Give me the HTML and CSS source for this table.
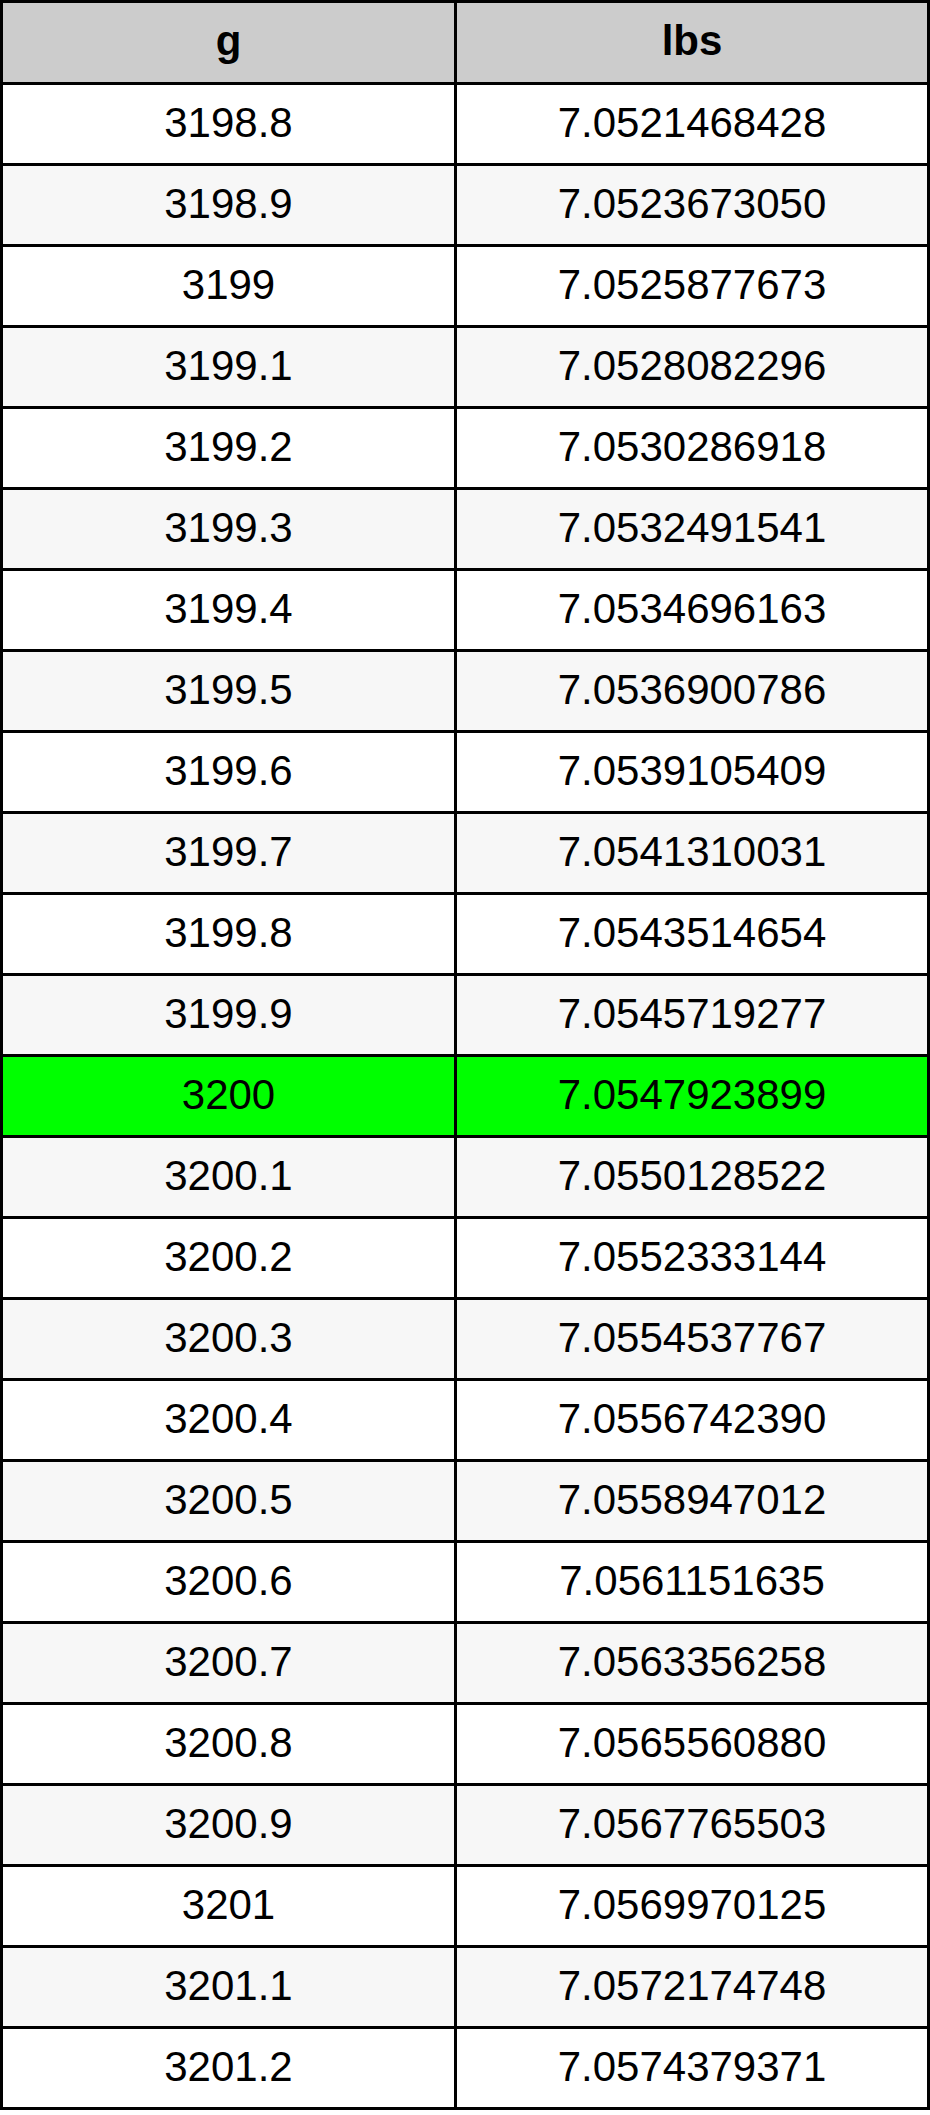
FILE: index.html
```html
<!DOCTYPE html>
<html>
<head>
<meta charset="utf-8">
<link rel="stylesheet" href="styles.css">
</head>
<body>
<table class="conv">
<thead>
<tr><th class="c1">g</th><th class="c2">lbs</th></tr>
</thead>
<tbody>
<tr><td>3198.8</td><td>7.0521468428</td></tr>
<tr><td>3198.9</td><td>7.0523673050</td></tr>
<tr><td>3199</td><td>7.0525877673</td></tr>
<tr><td>3199.1</td><td>7.0528082296</td></tr>
<tr><td>3199.2</td><td>7.0530286918</td></tr>
<tr><td>3199.3</td><td>7.0532491541</td></tr>
<tr><td>3199.4</td><td>7.0534696163</td></tr>
<tr><td>3199.5</td><td>7.0536900786</td></tr>
<tr><td>3199.6</td><td>7.0539105409</td></tr>
<tr><td>3199.7</td><td>7.0541310031</td></tr>
<tr><td>3199.8</td><td>7.0543514654</td></tr>
<tr><td>3199.9</td><td>7.0545719277</td></tr>
<tr class="hl"><td>3200</td><td>7.0547923899</td></tr>
<tr><td>3200.1</td><td>7.0550128522</td></tr>
<tr><td>3200.2</td><td>7.0552333144</td></tr>
<tr><td>3200.3</td><td>7.0554537767</td></tr>
<tr><td>3200.4</td><td>7.0556742390</td></tr>
<tr><td>3200.5</td><td>7.0558947012</td></tr>
<tr><td>3200.6</td><td>7.0561151635</td></tr>
<tr><td>3200.7</td><td>7.0563356258</td></tr>
<tr><td>3200.8</td><td>7.0565560880</td></tr>
<tr><td>3200.9</td><td>7.0567765503</td></tr>
<tr><td>3201</td><td>7.0569970125</td></tr>
<tr><td>3201.1</td><td>7.0572174748</td></tr>
<tr><td>3201.2</td><td>7.0574379371</td></tr>
</tbody>
</table>
</body>
</html>
```
FILE: styles.css
```css
html, body {
  margin: 0;
  padding: 0;
  background: #ffffff;
}
.conv {
  border-collapse: collapse;
  width: 930px;
  table-layout: fixed;
  font-family: "Liberation Sans", Arial, sans-serif;
  font-size: 42px;
  color: #000000;
  border: 3px solid #000000;
}
.conv th, .conv td {
  border: 3px solid #000000;
  text-align: center;
  padding: 0 0 3px 0;
  height: 75px;
  box-sizing: content-box;
  line-height: 1;
}
.conv th {
  background: #cccccc;
  font-weight: bold;
  height: 76px;
}
.conv .c1 { width: 451px; }
.conv .c2 { width: 470px; }
.conv tbody tr:nth-child(odd) td { background: #ffffff; }
.conv tbody tr:nth-child(even) td { background: #f7f7f7; }
.conv tbody tr.hl td { background: #00ff00; }
```
